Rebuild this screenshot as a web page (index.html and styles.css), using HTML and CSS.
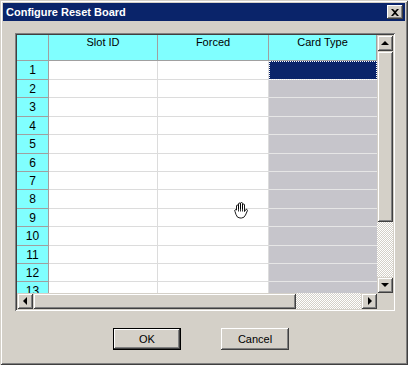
FILE: index.html
```html
<!DOCTYPE html>
<html lang="en">
<head>
    <meta charset="UTF-8">
    <title>Configure Reset Board</title>
    <link rel="stylesheet" href="styles.css">
</head>
<body>
    <div class="window">
        <div class="titlebar">
            <span class="title">Configure Reset Board</span>
            <span class="close">
                <svg width="8" height="7" viewBox="0 0 8 7"><path d="M0 0h2l2 2 2-2h2L5 3.5 8 7H6L4 5 2 7H0l3-3.5z" fill="#000"/></svg>
            </span>
        </div>

        <div class="frame">
            <div class="view">
                <div class="cells">
                    <div class="hd rh"></div>
                    <div class="hd">Slot ID</div>
                    <div class="hd">Forced</div>
                    <div class="hd">Card Type</div>

                    <div class="rh">1</div><div class="c"></div><div class="c"></div><div class="ct sel"></div>
                    <div class="rh">2</div><div class="c"></div><div class="c"></div><div class="ct"></div>
                    <div class="rh">3</div><div class="c"></div><div class="c"></div><div class="ct"></div>
                    <div class="rh">4</div><div class="c"></div><div class="c"></div><div class="ct"></div>
                    <div class="rh">5</div><div class="c"></div><div class="c"></div><div class="ct"></div>
                    <div class="rh">6</div><div class="c"></div><div class="c"></div><div class="ct"></div>
                    <div class="rh">7</div><div class="c"></div><div class="c"></div><div class="ct"></div>
                    <div class="rh">8</div><div class="c"></div><div class="c"></div><div class="ct"></div>
                    <div class="rh">9</div><div class="c"></div><div class="c"></div><div class="ct"></div>
                    <div class="rh">10</div><div class="c"></div><div class="c"></div><div class="ct"></div>
                    <div class="rh">11</div><div class="c"></div><div class="c"></div><div class="ct"></div>
                    <div class="rh">12</div><div class="c"></div><div class="c"></div><div class="ct"></div>
                    <div class="rh">13</div><div class="c"></div><div class="c"></div><div class="ct"></div>
                </div>

                <!-- vertical scrollbar -->
                <div class="vscroll">
                    <div class="sbtn"><i class="arr up"></i></div>
                    <div class="vthumb"></div>
                    <div class="track"></div>
                    <div class="sbtn"><i class="arr down"></i></div>
                </div>

                <!-- horizontal scrollbar -->
                <div class="hscroll">
                    <div class="sbtn"><i class="arr left"></i></div>
                    <div class="hthumb"></div>
                    <div class="track"></div>
                    <div class="sbtn"><i class="arr right"></i></div>
                </div>
                <div class="corner"></div>
            </div>
        </div>

        <div class="buttons">
            <button class="btn default">OK</button>
            <button class="btn">Cancel</button>
        </div>

        <svg class="cursor" width="20" height="20" viewBox="0 0 20 20">
            <path d="M5.5 10V6a1 1 0 0 1 2 0v3V4a1 1 0 0 1 2 0v5V3.5a1 1 0 0 1 2 0V9V5a1 1 0 0 1 2 0v6.5l1.2-1.8a1 1 0 0 1 1.7 1L14.5 15q-1.3 3-4 3H9q-3 0-4-3.5L4 11.5a1 1 0 0 1 1.5-1.5z" fill="#fff" stroke="#000" stroke-width="0.9" stroke-linejoin="round"/>
            <path d="M7.5 9v2.5M9.5 9v2.5M11.5 9v2.5" stroke="#000" stroke-width="0.8"/>
        </svg>
    </div>
</body>
</html>
```

FILE: styles.css
```css
* {
    margin: 0;
    padding: 0;
    box-sizing: border-box;
}

body {
    width: 408px;
    height: 365px;
    overflow: hidden;
    background: #d4d0c8;
    font-family: "Liberation Sans", Arial, sans-serif;
}

.window {
    position: relative;
    width: 408px;
    height: 365px;
    padding: 3px;
    background: #d4d0c8;
    box-shadow: inset 1px 1px #d4d0c8, inset -1px -1px #404040,
        inset 2px 2px #fff, inset -2px -2px #808080;
}

/* 标题栏 */
.titlebar {
    height: 18px;
    background: #0a246a;
    display: flex;
    align-items: center;
    justify-content: space-between;
    padding: 0 2px 0 3px;
}

.title {
    color: #fff;
    font-weight: bold;
    font-size: 11px;
}

.close {
    width: 16px;
    height: 14px;
    background: #d4d0c8;
    display: flex;
    align-items: center;
    justify-content: center;
    box-shadow: inset -1px -1px #404040, inset 1px 1px #fff, inset -2px -2px #808080;
}

/* 表格 */
.frame {
    width: 380px;
    height: 278px;
    margin: 12px 0 0 12px;
    padding: 2px;
    box-shadow: inset 1px 1px #808080, inset -1px -1px #fff,
        inset 2px 2px #404040, inset -2px -2px #d4d0c8;
}

.view {
    display: grid;
    grid-template-columns: 360px 16px;
    grid-template-rows: 258px 16px;
}

.cells {
    display: grid;
    grid-template-columns: 32px 109px 111px 108px;
    grid-template-rows: 26px 19px 18px 19px 18px 19px 18px 18px 19px 18px 19px 18px 18px 19px;
    overflow: hidden;
    font-size: 11px;
    color: #000;
}

.cells>div {
    border-right: 1px solid #dcdcdc;
    border-bottom: 1px solid #dcdcdc;
}

.hd {
    background: #80ffff;
    text-align: center;
    line-height: 13px;
    padding-top: 1px;
    border-color: #a0a0a0 !important;
}

.rh {
    background: #80ffff;
    border-color: #a0a0a0 !important;
    font-size: 12px;
    display: flex;
    align-items: center;
    justify-content: center;
}

.c {
    background: #fff;
}

.ct {
    background: #c6c5cb;
    border-bottom-color: #e6e6e6 !important;
    border-right: 0 !important;
}

.sel {
    background: #0a246a;
    outline: 1px dotted #fff;
    outline-offset: -1px;
}

/* 滚动条 */
.vscroll {
    display: flex;
    flex-direction: column;
}

.hscroll {
    display: flex;
}

.sbtn,
.vthumb,
.hthumb,
.corner {
    background: #d4d0c8;
}

.sbtn,
.vthumb,
.hthumb {
    box-shadow: inset 1px 1px #d4d0c8, inset -1px -1px #404040,
        inset 2px 2px #fff, inset -2px -2px #808080;
}

.sbtn {
    width: 16px;
    height: 16px;
    flex: none;
    display: flex;
    align-items: center;
    justify-content: center;
}

.vthumb {
    height: 171px;
}

.hthumb {
    width: 263px;
}

.track {
    flex: 1;
    background: repeating-conic-gradient(#fff 0 25%, #d4d0c8 0 50%) 0 0/2px 2px;
}

.arr {
    width: 0;
    height: 0;
    border: 4px solid transparent;
}

.arr.up {
    border-bottom-color: #000;
    border-top-width: 0;
    margin-top: -1px;
}

.arr.down {
    border-top-color: #000;
    border-bottom-width: 0;
}

.arr.left {
    border-right-color: #000;
    border-left-width: 0;
}

.arr.right {
    border-left-color: #000;
    border-right-width: 0;
    margin-left: 1px;
}

/* 按钮 */
.buttons {
    display: flex;
    gap: 40px;
    margin: 17px 0 0 110px;
}

.btn {
    width: 68px;
    height: 22px;
    border: 0;
    background: #d4d0c8;
    font-family: "Liberation Sans", Arial, sans-serif;
    font-size: 11px;
    color: #000;
    box-shadow: inset -1px -1px #404040, inset 1px 1px #fff, inset -2px -2px #808080;
}

.btn.default {
    box-shadow: inset 0 0 0 1px #000, inset -2px -2px #404040,
        inset 2px 2px #fff, inset -3px -3px #808080;
}

.cursor {
    position: absolute;
    left: 231px;
    top: 200px;
}
```
